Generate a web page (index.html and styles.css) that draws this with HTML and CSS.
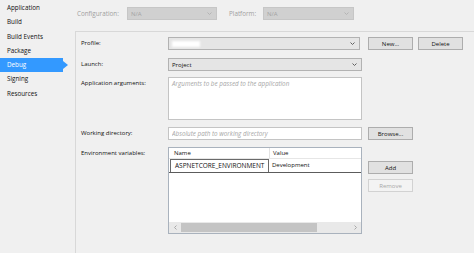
FILE: index.html
```html
<!DOCTYPE html>
<html lang="en">
<head>
    <meta charset="UTF-8">
    <title>Debug Properties</title>
    <link rel="stylesheet" href="styles.css">
</head>
<body>
    <div class="window">
        <!-- Property page tabs -->
        <nav class="sidebar">
            <ul class="nav-list">
                <li class="nav-item">Application</li>
                <li class="nav-item">Build</li>
                <li class="nav-item">Build Events</li>
                <li class="nav-item">Package</li>
                <li class="nav-item active">Debug</li>
                <li class="nav-item">Signing</li>
                <li class="nav-item">Resources</li>
            </ul>
        </nav>

        <main class="content">
            <!-- Configuration / Platform bar -->
            <div class="toolbar">
                <span class="tool-label">Configuration:</span>
                <div class="select disabled">
                    <span>N/A</span>
                    <svg class="chevron" width="5" height="3" viewBox="0 0 5 3"><path d="M0.5 0.5 L2.5 2.5 L4.5 0.5" fill="none" stroke="#b4b4b4"/></svg>
                </div>
                <span class="tool-label platform">Platform:</span>
                <div class="select disabled wide">
                    <span>N/A</span>
                    <svg class="chevron" width="5" height="3" viewBox="0 0 5 3"><path d="M0.5 0.5 L2.5 2.5 L4.5 0.5" fill="none" stroke="#b4b4b4"/></svg>
                </div>
            </div>

            <!-- Debug settings -->
            <div class="panel">
                <label class="field-label">Profile:</label>
                <div class="select profile-select">
                    <span class="redacted"></span>
                    <svg class="chevron" width="5" height="3" viewBox="0 0 5 3"><path d="M0.5 0.5 L2.5 2.5 L4.5 0.5" fill="none" stroke="#606060"/></svg>
                </div>
                <div class="actions">
                    <button class="btn">New...</button>
                    <button class="btn">Delete</button>
                </div>

                <label class="field-label shifted">Launch:</label>
                <div class="select shifted">
                    <span>Project</span>
                    <svg class="chevron" width="5" height="3" viewBox="0 0 5 3"><path d="M0.5 0.5 L2.5 2.5 L4.5 0.5" fill="none" stroke="#606060"/></svg>
                </div>
                <div></div>

                <label class="field-label">Application arguments:</label>
                <textarea class="text-box" placeholder="Arguments to be passed to the application"></textarea>
                <div></div>

                <label class="field-label">Working directory:</label>
                <input class="text-box" type="text" placeholder="Absolute path to working directory">
                <div class="actions">
                    <button class="btn">Browse...</button>
                </div>

                <label class="field-label">Environment variables:</label>
                <div class="env-grid">
                    <div class="env-head">
                        <span class="cell">Name</span>
                        <span class="cell divider">Value</span>
                    </div>
                    <div class="env-row">
                        <span class="cell selected">ASPNETCORE_ENVIRONMENT</span>
                        <span class="cell">Development</span>
                    </div>
                    <div class="env-body"></div>
                    <div class="hscroll">
                        <span class="scroll-arrow">
                            <svg width="3" height="5" viewBox="0 0 3 5"><path d="M2.5 0.5 L0.5 2.5 L2.5 4.5" fill="none" stroke="#a8a8a8"/></svg>
                        </span>
                        <span class="scroll-thumb"></span>
                        <span class="scroll-track"></span>
                        <span class="scroll-arrow">
                            <svg width="3" height="5" viewBox="0 0 3 5"><path d="M0.5 0.5 L2.5 2.5 L0.5 4.5" fill="none" stroke="#a8a8a8"/></svg>
                        </span>
                    </div>
                </div>
                <div class="actions stack">
                    <button class="btn">Add</button>
                    <button class="btn" disabled>Remove</button>
                </div>
            </div>
        </main>
    </div>
</body>
</html>
```

FILE: styles.css
```css
/* Reset and base styles */
* {
    box-sizing: border-box;
}

body {
    margin: 0;
    background: #f0f0f0;
    font-family: 'Open Sans', 'Liberation Sans', sans-serif;
    font-size: 6px;
    color: #111;
}

.window {
    display: flex;
    width: 474px;
    height: 253px;
    overflow: hidden;
}

/* Sidebar tabs */
.sidebar {
    width: 75px;
    flex-shrink: 0;
    padding-top: 1px;
}

.nav-list {
    list-style: none;
    margin: 0;
    padding: 0;
}

.nav-item {
    position: relative;
    width: 63px;
    height: 14.3px;
    line-height: 14.3px;
    padding-left: 7px;
    font-size: 6.3px;
}

.nav-item.active {
    background: #3399ff;
    color: #fff;
}

.nav-item.active::after {
    content: "";
    position: absolute;
    right: -5px;
    top: 50%;
    margin-top: -4px;
    border-left: 5px solid #3399ff;
    border-top: 4px solid transparent;
    border-bottom: 4px solid transparent;
}

/* Main area */
.content {
    flex: 1;
    display: flex;
    flex-direction: column;
}

.toolbar {
    height: 31px;
    display: flex;
    align-items: flex-start;
    padding: 7px 0 0 2px;
}

.tool-label {
    width: 50px;
    line-height: 13px;
    font-size: 6.3px;
    color: #a0a0a0;
}

.tool-label.platform {
    width: 34px;
    margin-left: 12px;
}

/* Combo boxes */
.select {
    display: flex;
    align-items: center;
    justify-content: space-between;
    height: 13px;
    padding: 0 4px 0 3px;
    border: 1px solid #b2b2b2;
    background: #e5e5e5;
}

.select.disabled {
    width: 90px;
    background: #d0d0d0;
    border-color: #c6c6c6;
    color: #a3a3a3;
}

.select.disabled.wide {
    width: 91px;
}

.profile-select {
    width: 192px;
}

.redacted {
    width: 28px;
    height: 6px;
    background: #fff;
    filter: blur(1px);
}

.chevron {
    display: block;
}

/* Form grid */
.panel {
    flex: 1;
    display: grid;
    grid-template-columns: 87px 194px auto;
    grid-template-rows: 13px 13px 43px 13px 87px;
    row-gap: 7px;
    align-content: start;
    padding: 5px 0 0 5px;
    border-top: 1px solid #d8d8d8;
    border-left: 1px solid #d8d8d8;
}

.field-label {
    line-height: 13px;
}

.shifted {
    margin-top: 1px;
}

.actions {
    display: flex;
    align-items: flex-start;
    gap: 5px;
    padding-left: 6px;
}

.actions.stack {
    flex-direction: column;
    padding-top: 14px;
}

.btn {
    width: 45px;
    height: 13px;
    padding: 0;
    border: 1px solid #adadad;
    background: #e1e1e1;
    font-family: inherit;
    font-size: 6px;
    color: #111;
}

.btn:disabled {
    background: #f3f3f3;
    border-color: #d2d2d2;
    color: #a8a8a8;
}

.text-box {
    width: 100%;
    height: 100%;
    margin: 0;
    padding: 1px 3px;
    border: 1px solid #c4c4c4;
    background: #fff;
    font-family: inherit;
    font-size: 6.3px;
    resize: none;
    outline: none;
}

.text-box::placeholder {
    font-style: italic;
    color: #a6a6a6;
}

/* Environment variables grid */
.env-grid {
    display: flex;
    flex-direction: column;
    border: 1px solid #a9b2bd;
    background: #fff;
}

.env-head,
.env-row {
    display: grid;
    grid-template-columns: 100px 1fr;
}

.env-head {
    height: 11px;
    border-bottom: 1px solid #e6e6e6;
}

.env-head .cell {
    line-height: 10px;
    padding-left: 5px;
}

.env-head .divider {
    border-left: 1px solid #e3e3e3;
    padding-left: 3px;
}

.env-row {
    height: 14px;
    border-bottom: 1px solid #5c5c5c;
}

.env-row .cell {
    line-height: 13px;
    padding-left: 3px;
}

.env-row .selected {
    margin-left: 1px;
    padding-left: 4px;
    border: 1px solid #6a6a6a;
    border-bottom: none;
    line-height: 12px;
    font-size: 6.5px;
    white-space: nowrap;
    overflow: hidden;
}

.env-body {
    flex: 1;
}

.hscroll {
    display: flex;
    align-items: stretch;
    height: 11px;
    background: #e9e9e9;
}

.scroll-arrow {
    width: 12px;
    display: flex;
    align-items: center;
    justify-content: center;
}

.scroll-thumb {
    width: 136px;
    margin: 1px 0;
    background: #c4c4c4;
}

.scroll-track {
    flex: 1;
}
```
